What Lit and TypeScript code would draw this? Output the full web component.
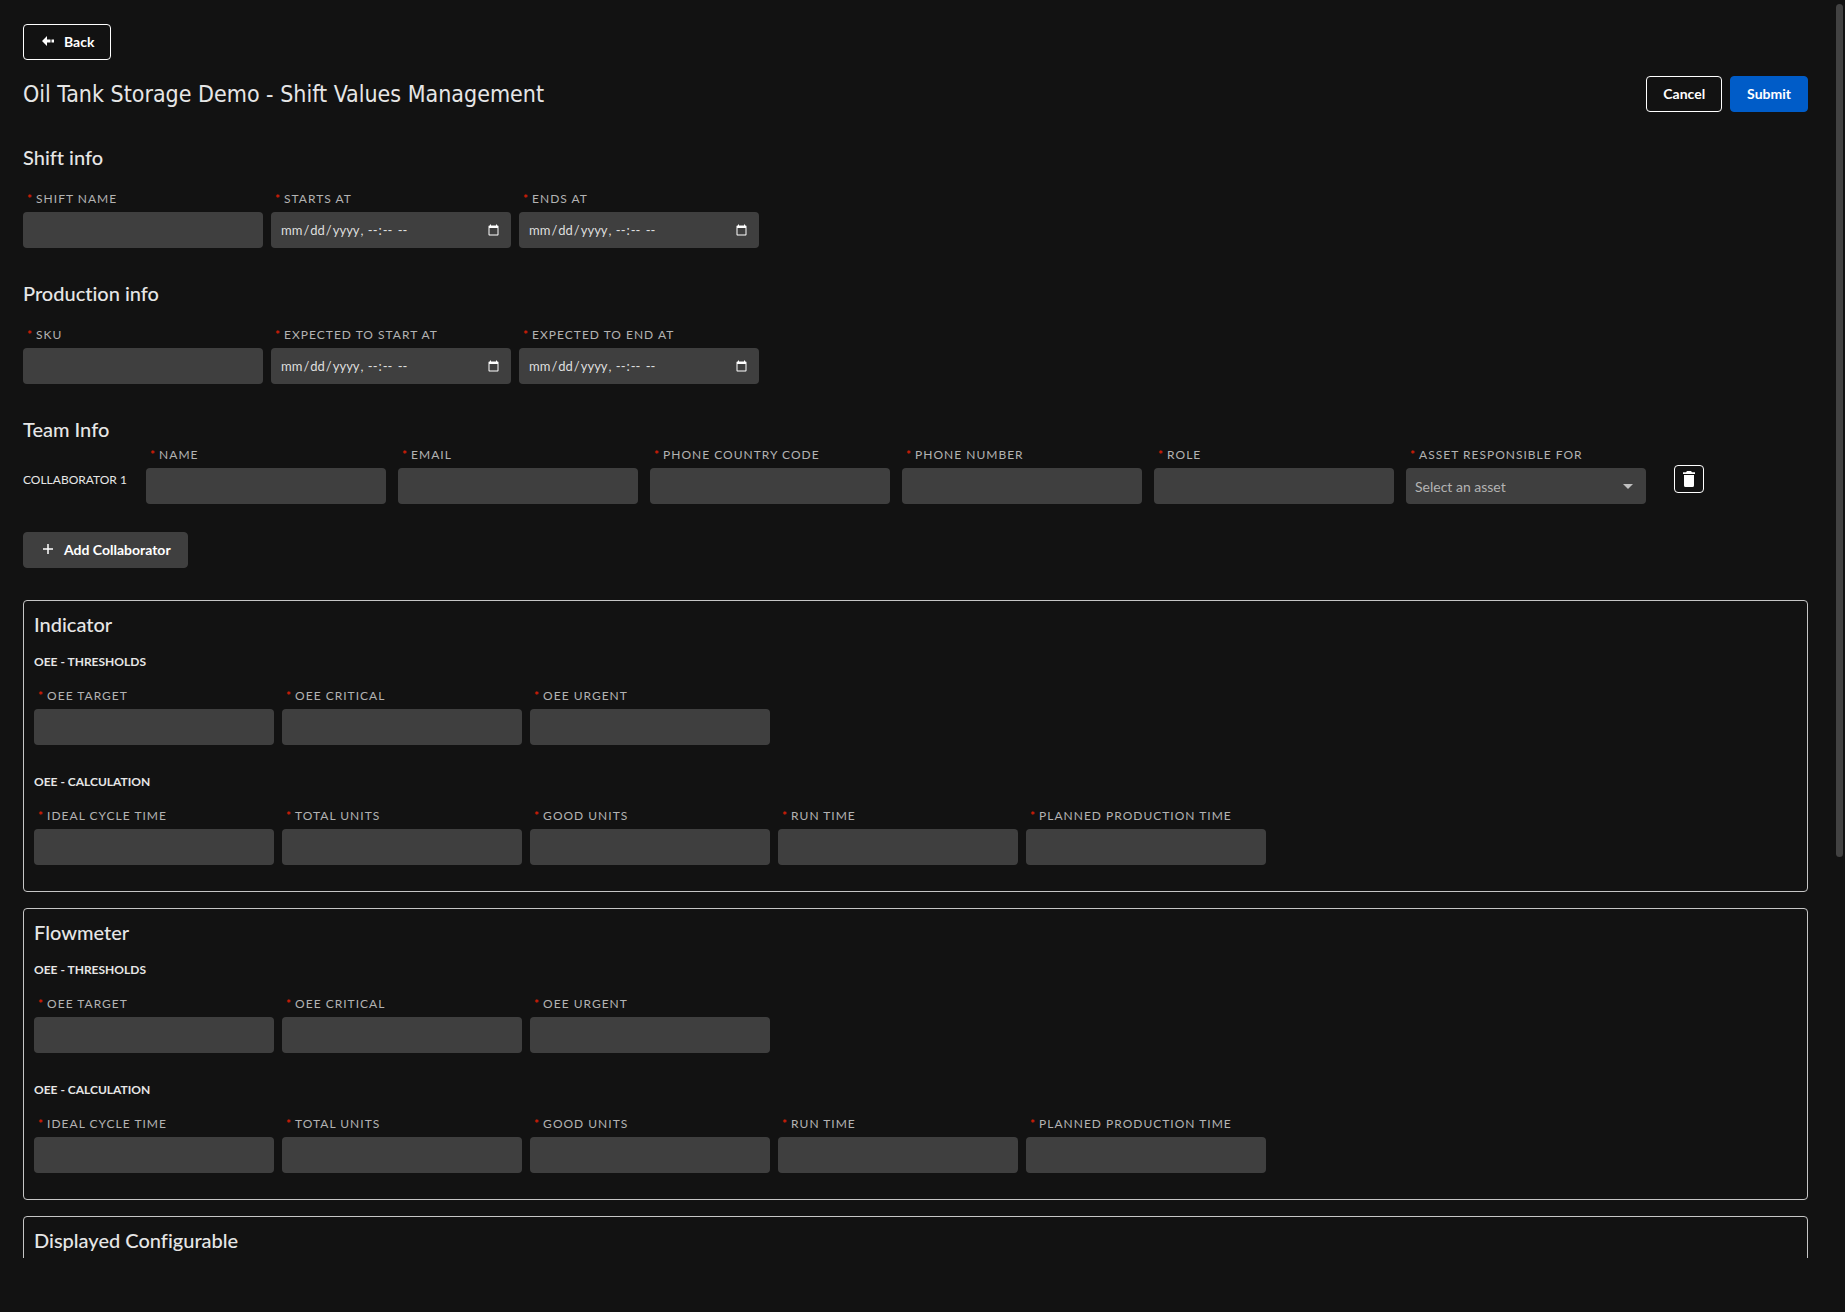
import { LitElement, html, css, svg } from "lit";
import { customElement, property } from "lit/decorators.js";

interface Field {
  label: string;
  type?: "text" | "datetime-local" | "select";
  placeholder?: string;
}

interface Group {
  title: string;
  fields: Field[];
}

const SHIFT: Field[] = [
  { label: "Shift name" },
  { label: "Starts at", type: "datetime-local" },
  { label: "Ends at", type: "datetime-local" },
];
const PRODUCTION: Field[] = [
  { label: "SKU" },
  { label: "Expected to start at", type: "datetime-local" },
  { label: "Expected to end at", type: "datetime-local" },
];
const TEAM: Field[] = [
  { label: "Name" },
  { label: "Email" },
  { label: "Phone country code" },
  { label: "Phone number" },
  { label: "Role" },
  { label: "Asset responsible for", type: "select", placeholder: "Select an asset" },
];
const OEE: Group[] = [
  {
    title: "OEE - Thresholds",
    fields: [{ label: "OEE target" }, { label: "OEE critical" }, { label: "OEE urgent" }],
  },
  {
    title: "OEE - Calculation",
    fields: [
      { label: "Ideal cycle time" },
      { label: "Total units" },
      { label: "Good units" },
      { label: "Run time" },
      { label: "Planned production time" },
    ],
  },
];
const ASSETS: { name: string; groups: Group[] }[] = [
  { name: "Indicator", groups: OEE },
  { name: "Flowmeter", groups: OEE },
  { name: "Displayed Configurable", groups: [] },
];

const arrowIcon = svg`<path d="M0 6 5 1V4.500H8.500V7.500H5V11Z M9.500 4.500h2.500v3H9.500z" fill="currentColor"/>`;
const plusIcon = svg`<path d="M6 1v10M1 6h10" stroke="currentColor" stroke-width="1.500"/>`;
const trashIcon = svg`<path d="M0 1.200h3L4 0h4l1 1.200h3V3H0z M1 4h10v10.500A1.500 1.500 0 0 1 9.500 16h-7A1.500 1.500 0 0 1 1 14.500z" fill="currentColor"/>`;

@customElement("form-field")
class FormField extends LitElement {
  @property({ attribute: false }) field!: Field;

  static styles = css`
    :host {
      display: flex;
      flex-direction: column;
      flex: 0 1 240px;
      min-width: 0;
    }
    .label {
      padding-left: 4px;
      margin-bottom: 4px;
      font-size: 12px;
      line-height: 18px;
      letter-spacing: 1px;
      text-transform: uppercase;
      white-space: nowrap;
      color: #b3b3b3;
    }
    .star {
      color: #da1e05;
      font-weight: 700;
      margin-right: 3px;
    }
    .control {
      box-sizing: border-box;
      width: 100%;
      height: 36px;
      margin: 0;
      padding: 0 9px;
      border: 0;
      border-radius: 4px;
      background: #3f3f3f;
      color: #dedede;
      color-scheme: dark;
      font-family: inherit;
      font-size: 14px;
    }
    .date {
      font-size: 13px;
    }
    .select {
      appearance: none;
      padding-right: 36px;
      color: #b3b3b3;
    }
    .wrap {
      display: grid;
      align-items: center;
    }
    .wrap > * {
      grid-area: 1 / 1;
    }
    .caret {
      justify-self: end;
      margin-right: 13px;
      border: 5px solid transparent;
      border-top-color: #c0c0c0;
      border-bottom: 0;
      pointer-events: none;
    }
  `;

  private control(f: Field) {
    if (f.type === "select") {
      return html`<div class="wrap">
        <select class="control select" id="c" required>
          <option value="">${f.placeholder}</option>
          ${ASSETS.map((a) => html`<option>${a.name}</option>`)}
        </select>
        <span class="caret"></span>
      </div>`;
    }
    if (f.type === "datetime-local") {
      return html`<input class="control date" id="c" type="datetime-local" required />`;
    }
    return html`<input class="control" id="c" type="text" required />`;
  }

  render() {
    return html`
      <label class="label" for="c"><span class="star">*</span>${this.field.label}</label>
      ${this.control(this.field)}
    `;
  }
}

@customElement("app-root")
class AppRoot extends LitElement {
  static styles = css`
    :host {
      display: flex;
      height: 100vh;
      background: #121212;
      color: #e6e6e6;
      font-family: "Lato", "Liberation Sans", sans-serif;
      font-variant-ligatures: none;
    }
    .page {
      box-sizing: border-box;
      flex: 1;
      min-width: 0;
      height: calc(100vh - 54px);
      overflow: auto;
      scrollbar-width: none;
      padding: 24px 28px 0 23px;
    }
    .rail {
      padding: 4px 2px 0 0;
    }
    .thumb {
      width: 7px;
      height: 65vh;
      border-radius: 4px;
      background: #424242;
    }
    .btn {
      box-sizing: border-box;
      display: inline-flex;
      align-items: center;
      height: 36px;
      padding: 0 16px 2px;
      border: 1px solid #fff;
      border-radius: 4px;
      background: transparent;
      color: #fff;
      font: 700 14px "Lato", sans-serif;
      white-space: nowrap;
    }
    .btn svg {
      margin: 0 10px 0 2px;
    }
    .primary {
      background: #005cc8;
      border-color: #005cc8;
    }
    .neutral {
      background: #3f3f3f;
      border-color: #3f3f3f;
    }
    .head {
      display: flex;
      align-items: center;
      justify-content: space-between;
      height: 36px;
      margin: 16px 0 32px;
    }
    .title {
      margin: 0;
      font: 400 23px/32px "DejaVu Sans Condensed", "Noto Sans", sans-serif;
    }
    .actions {
      display: flex;
      gap: 8px;
    }
    .heading {
      margin: 0;
      font-size: 20px;
      line-height: 26px;
      font-weight: 500;
    }
    .row {
      display: flex;
      gap: 8px;
    }
    .section {
      padding-bottom: 32px;
    }
    .section .row {
      margin-top: 20px;
    }
    .team {
      display: flex;
      align-items: center;
      gap: 12px;
      margin: 4px 0 20px;
    }
    .team form-field {
      padding-bottom: 8px;
    }
    .who {
      flex: 0 0 111px;
      font-size: 12px;
      text-transform: uppercase;
    }
    .btn.trash {
      width: 30px;
      height: 28px;
      padding: 0;
      justify-content: center;
      margin-left: 16px;
    }
    .btn.trash svg {
      margin: 0;
    }
    .panels {
      display: flex;
      flex-direction: column;
      gap: 16px;
      margin-top: 32px;
    }
    .panel {
      border: 1px solid #c6c6c6;
      border-radius: 4px;
      padding: 10px 10px 26px;
    }
    .sub {
      margin: 27px 0 15px;
      font-size: 12px;
      line-height: 20px;
      font-weight: 700;
      text-transform: uppercase;
    }
    .heading + .sub {
      margin-top: 15px;
    }
  `;

  private fields(list: Field[]) {
    return list.map((f) => html`<form-field .field=${f}></form-field>`);
  }

  render() {
    return html`
      <main class="page">
        <button class="btn" type="button">
          <svg width="12" height="12" viewBox="0 0 12 12" aria-hidden="true">${arrowIcon}</svg>Back
        </button>
        <header class="head">
          <h1 class="title">Oil Tank Storage Demo - Shift Values Management</h1>
          <div class="actions">
            <button class="btn" type="button">Cancel</button>
            <button class="btn primary" type="button">Submit</button>
          </div>
        </header>
        <section class="section">
          <h2 class="heading">Shift info</h2>
          <div class="row">${this.fields(SHIFT)}</div>
        </section>
        <section class="section">
          <h2 class="heading">Production info</h2>
          <div class="row">${this.fields(PRODUCTION)}</div>
        </section>
        <section>
          <h2 class="heading">Team Info</h2>
          <div class="team">
            <span class="who">Collaborator 1</span>
            ${this.fields(TEAM)}
            <button class="btn trash" type="button" aria-label="Remove collaborator">
              <svg width="12" height="16" viewBox="0 0 12 16" aria-hidden="true">${trashIcon}</svg>
            </button>
          </div>
          <button class="btn neutral" type="button">
            <svg width="12" height="12" viewBox="0 0 12 12" aria-hidden="true">${plusIcon}</svg>Add Collaborator
          </button>
        </section>
        <div class="panels">
          ${ASSETS.map(
            (asset) => html`<section class="panel">
              <h2 class="heading">${asset.name}</h2>
              ${asset.groups.map(
                (g) => html`<h3 class="sub">${g.title}</h3>
                  <div class="row">${this.fields(g.fields)}</div>`
              )}
            </section>`
          )}
        </div>
      </main>
      <div class="rail"><div class="thumb"></div></div>
    `;
  }
}
